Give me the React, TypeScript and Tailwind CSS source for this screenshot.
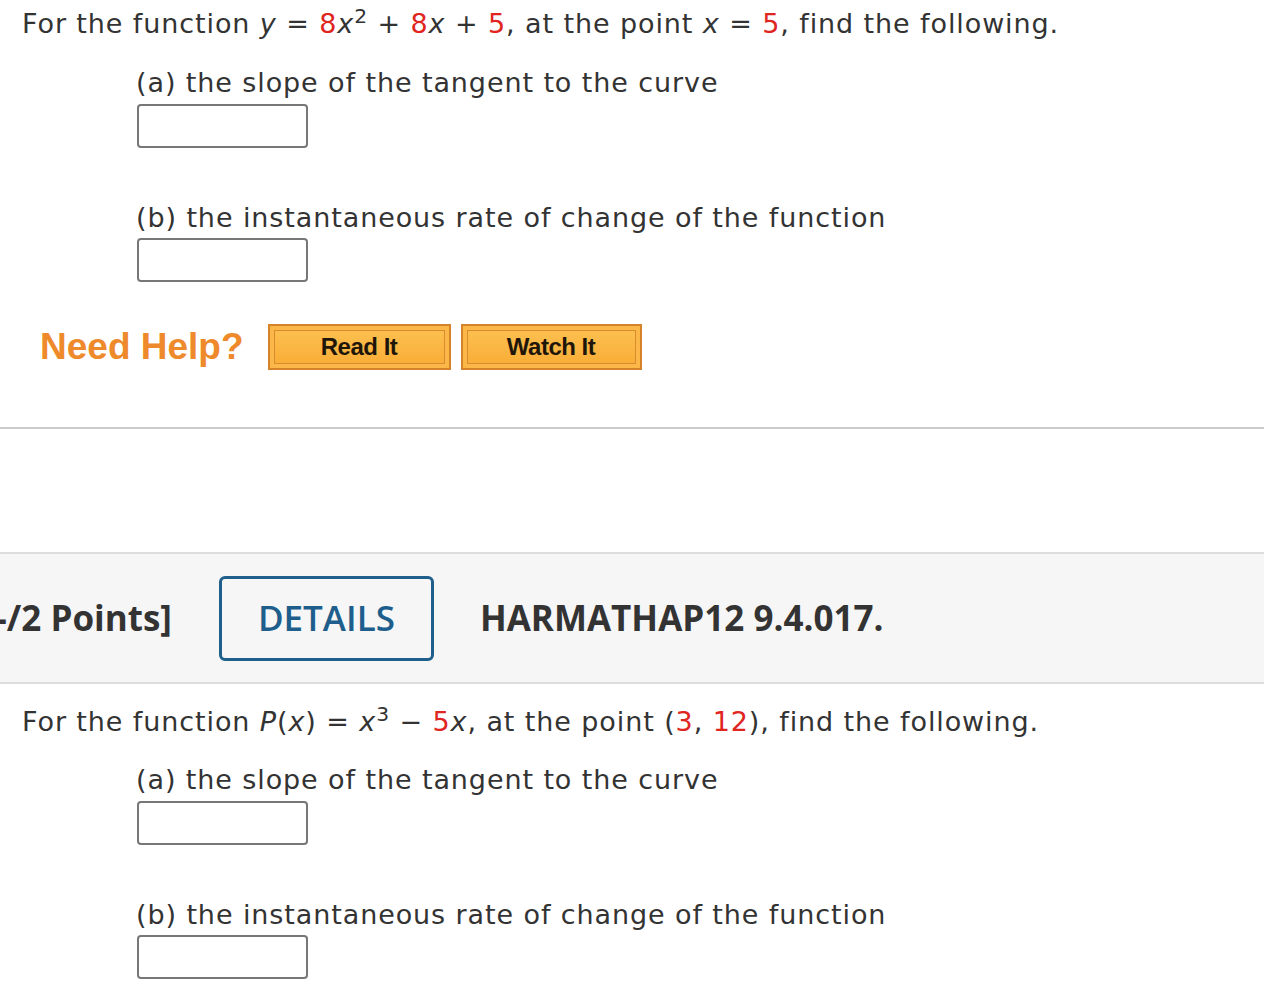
import React from 'react';

const Red: React.FC<{ children: React.ReactNode }> = ({ children }) => (
  <span className="text-[#e0251f]">{children}</span>
);

const AnswerBox: React.FC = () => (
  <div className="ml-[137px] w-[171px] h-[44px] rounded-[4px] border-2 border-[#777777] bg-white" />
);

const HelpButton: React.FC<{ label: string; width: string }> = ({ label, width }) => (
  <div className={`${width} h-[46px] border-2 border-[#d4832a] bg-[#fbb848] p-[4px]`}>
    <div className="h-full border border-[#d98c2f] bg-gradient-to-b from-[#fcbf4e] to-[#f9ae38] flex items-center justify-center">
      <span className="font-['Liberation_Sans',Arial,sans-serif] font-bold text-[24px] tracking-[-0.5px] text-[#1f160a]">{label}</span>
    </div>
  </div>
);

const App: React.FC = () => {
  return (
    <div className="min-h-screen bg-white overflow-hidden text-[#333333] font-['DejaVu_Sans',Verdana,sans-serif] text-[27px] tracking-[0.9px]">
      {/* Question 1 */}
      <div className="pl-[22px] mt-[9px] leading-[30px] whitespace-nowrap">
        For the function <i>y</i> = <Red>8</Red><i>x</i><sup>2</sup> + <Red>8</Red><i>x</i> + <Red>5</Red>, at the point <i>x</i> = <Red>5</Red>, find the following.
      </div>
      <div className="pl-[136px] mt-[29px] leading-[30px]">(a) the slope of the tangent to the curve</div>
      <div className="mt-[6px]">
        <AnswerBox />
      </div>
      <div className="pl-[136px] mt-[55px] leading-[30px]">(b) the instantaneous rate of change of the function</div>
      <div className="mt-[5px]">
        <AnswerBox />
      </div>

      {/* Need help */}
      <div className="mt-[42px] pl-[40px] flex items-center h-[46px] tracking-normal">
        <span className="font-['Liberation_Sans',Arial,sans-serif] font-bold text-[37px] text-[#ee8a2b] mr-[24px]">Need Help?</span>
        <HelpButton label="Read It" width="w-[183px]" />
        <div className="w-[10px]" />
        <HelpButton label="Watch It" width="w-[181px]" />
      </div>

      <div className="mt-[57px] h-[2px] bg-[#cccccc]" />

      {/* Question 2 header */}
      <div className="mt-[123px] h-[132px] border-y-2 border-[#dddddd] bg-[#f6f6f6] flex items-center font-['Open_Sans',sans-serif] whitespace-nowrap tracking-normal">
        <span className="ml-[-16px] font-bold text-[35px] text-[#333333]">[-/2 Points]</span>
        <div className="ml-[47px] w-[215px] h-[85px] rounded-[6px] border-[3px] border-[#1f5f8b] flex items-center justify-center">
          <span className="font-semibold text-[35px] text-[#1d5e8c]">DETAILS</span>
        </div>
        <span className="ml-[46px] font-bold text-[35px] text-[#333333]">HARMATHAP12 9.4.017.</span>
      </div>

      {/* Question 2 */}
      <div className="pl-[22px] mt-[23px] leading-[30px] whitespace-nowrap">
        For the function <i>P</i>(<i>x</i>) = <i>x</i><sup>3</sup> − <Red>5</Red><i>x</i>, at the point (<Red>3</Red>, <Red>12</Red>), find the following.
      </div>
      <div className="pl-[136px] mt-[28px] leading-[30px]">(a) the slope of the tangent to the curve</div>
      <div className="mt-[6px]">
        <AnswerBox />
      </div>
      <div className="pl-[136px] mt-[55px] leading-[30px]">(b) the instantaneous rate of change of the function</div>
      <div className="mt-[5px]">
        <AnswerBox />
      </div>
    </div>
  );
};

export default App;
